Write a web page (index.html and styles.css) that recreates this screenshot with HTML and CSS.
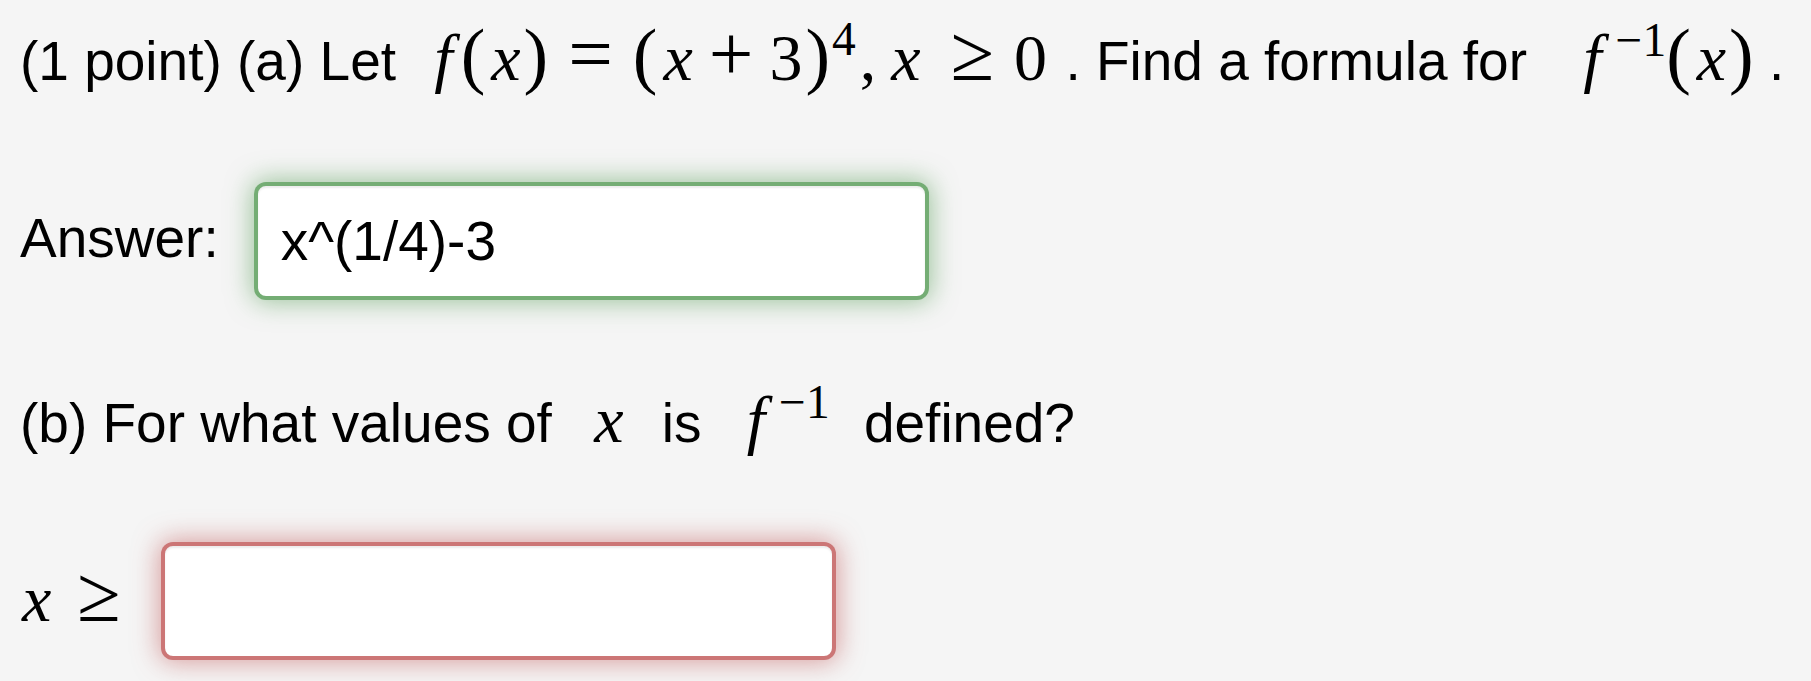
FILE: index.html
```html
<!DOCTYPE html>
<html lang="en">

<head>
    <meta charset="UTF-8">
    <meta name="viewport" content="width=device-width, initial-scale=1.0">
    <title>Inverse function</title>

    <link rel="stylesheet" href="styles.css">
</head>

<body>
    <div class="problem">
        <p class="line first">(1 point) (a) Let <span class="math m-let"><i class="fn">f</i><span class="open">(</span><i>x</i><span class="close">)</span><span class="rel">=</span><span class="open">(</span><i>x</i><span class="bin">+</span>3<span class="close">)</span><sup>4</sup><span class="comma">,</span><i>x</i><span class="rel wide">≥</span>0</span> . Find a formula for <span class="math m-for"><i class="fn">f</i><sup class="inv">−1</sup><span class="open">(</span><i>x</i><span class="close">)</span></span> .</p>

        <div class="answer-row">
            <label for="ans1">Answer:</label>
            <input type="text" id="ans1" class="ans correct" value="x^(1/4)-3">
        </div>

        <p class="line second">(b) For what values of <span class="math m-x"><i>x</i></span> is <span class="math m-inv"><i class="fn">f</i><sup class="inv">−1</sup></span> defined?</p>

        <div class="answer-row bound">
            <span class="math"><i>x</i><span class="rel">≥</span></span>
            <input type="text" id="ans2" class="ans incorrect" value="">
        </div>
    </div>
</body>

</html>
```

FILE: styles.css
```css
body {
    margin: 0;
    background-color: #f5f5f5;
    color: #000;
    font-family: "Liberation Sans", Arial, sans-serif;
    font-size: 55px;
}

.problem {
    padding: 28px 20px 21px 20px;
}

.line {
    margin: 0;
    line-height: 66px;
    white-space: nowrap;
}

.second {
    margin-top: 90px;
}

/* inline math, set a little larger than the text like MathJax does */
.math {
    font-family: "Liberation Serif", "Times New Roman", serif;
    font-size: 66px;
    line-height: 0;
}

.math i {
    font-style: italic;
}

.m-let {
    margin: 0 3px 0 23px;
}

.m-for {
    margin-left: 41px;
}

.m-x {
    margin: 0 23px 0 27px;
}

.m-inv {
    margin: 0 19px 0 30px;
}

.fn {
    margin-right: 8px;
}

.open,
.close {
    font-size: 1.12em;
}

.open {
    margin-right: 6px;
}

.close {
    margin-left: 3px;
}

.math sup {
    font-size: 0.72em;
    line-height: 0;
    vertical-align: 25px;
    margin-left: 2px;
}

.math sup.inv {
    margin-left: 6px;
    vertical-align: 24px;
}

.rel,
.bin {
    font-size: 1.2em;
}

.rel {
    margin: 0 20px;
}

.rel.wide {
    margin-left: 30px;
}

.bin {
    margin: 0 16px;
}

.comma {
    margin: 0 15px 0 4px;
}

.answer-row {
    display: flex;
    align-items: center;
    margin-top: 88px;
}

.answer-row label {
    line-height: 66px;
    margin: 0 35px 6px 0;
}

.bound {
    margin-top: 86px;
}

.bound .math {
    line-height: 66px;
    margin: 0 40px 10px 2px;
}

.bound .rel {
    margin: 0 0 0 26px;
}

.ans {
    box-sizing: border-box;
    width: 675px;
    height: 118px;
    padding: 0 23px;
    border: 4px solid rgba(81, 153, 81, 0.8);
    border-radius: 12px;
    background-color: #fff;
    color: #000;
    font-family: "Liberation Sans", Arial, sans-serif;
    font-size: 55px;
    outline: none;
    box-shadow: inset 0 2px 2px rgba(0, 0, 0, 0.075), 0 0 26px 2px rgba(81, 153, 81, 0.55);
}

.incorrect {
    border-color: rgba(191, 84, 84, 0.8);
    box-shadow: inset 0 2px 2px rgba(0, 0, 0, 0.075), 0 0 26px 2px rgba(191, 84, 84, 0.55);
}
```
